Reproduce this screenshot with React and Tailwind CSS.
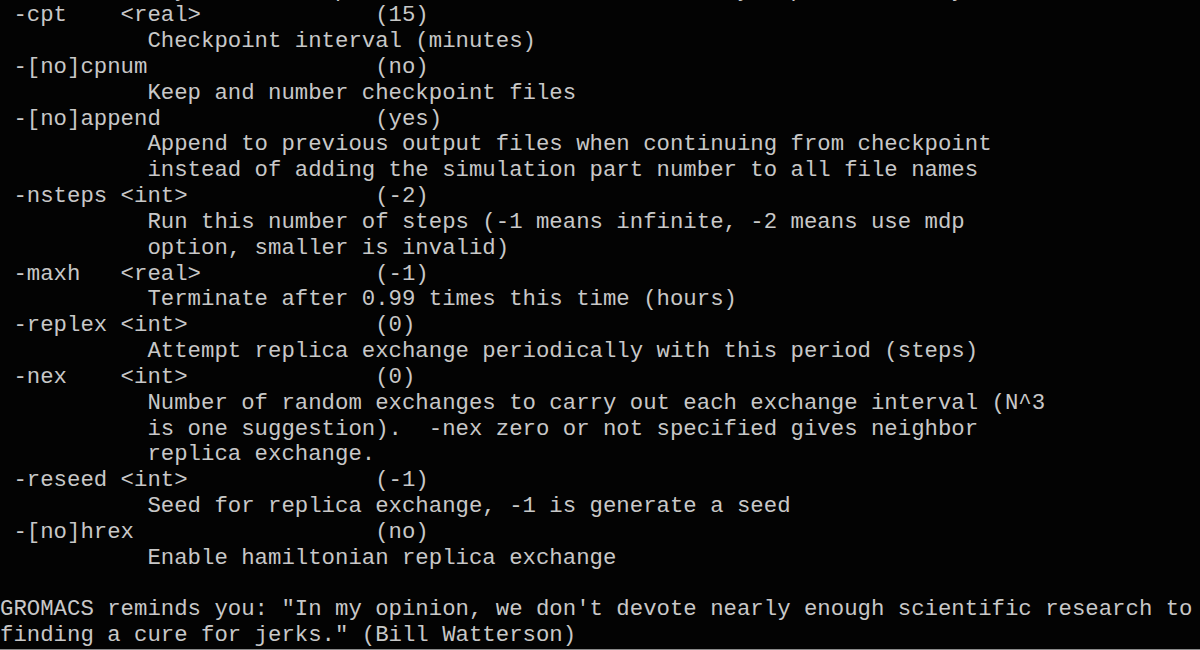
import React from 'react';

const INDENT = ' '.repeat(11);

const opt = (name, def) => name.padEnd(28, ' ') + def;
const desc = (text) => INDENT + text;

const lines = [
  desc('Try to avoid optimizations that affect binary reproducibility'),
  opt(' -cpt    <real>', '(15)'),
  desc('Checkpoint interval (minutes)'),
  opt(' -[no]cpnum', '(no)'),
  desc('Keep and number checkpoint files'),
  opt(' -[no]append', '(yes)'),
  desc('Append to previous output files when continuing from checkpoint'),
  desc('instead of adding the simulation part number to all file names'),
  opt(' -nsteps <int>', '(-2)'),
  desc('Run this number of steps (-1 means infinite, -2 means use mdp'),
  desc('option, smaller is invalid)'),
  opt(' -maxh   <real>', '(-1)'),
  desc('Terminate after 0.99 times this time (hours)'),
  opt(' -replex <int>', '(0)'),
  desc('Attempt replica exchange periodically with this period (steps)'),
  opt(' -nex    <int>', '(0)'),
  desc('Number of random exchanges to carry out each exchange interval (N^3'),
  desc('is one suggestion).  -nex zero or not specified gives neighbor'),
  desc('replica exchange.'),
  opt(' -reseed <int>', '(-1)'),
  desc('Seed for replica exchange, -1 is generate a seed'),
  opt(' -[no]hrex', '(no)'),
  desc('Enable hamiltonian replica exchange'),
  '',
  'GROMACS reminds you: "In my opinion, we don\'t devote nearly enough scientific research to',
  'finding a cure for jerks." (Bill Watterson)',
];

export default function App() {
  return (
    <div className="w-[1200px] h-[650px] overflow-hidden bg-[#030303] border-b border-[#8a8a8a]">
      <div className="-mt-[22.5px] font-['Liberation_Mono',monospace] text-[22.33px] leading-[25.83px] text-[#c8c8c8]">
        {lines.map((line, i) => (
          <div key={i} className="whitespace-pre h-[25.83px]">
            {line}
          </div>
        ))}
      </div>
    </div>
  );
}
